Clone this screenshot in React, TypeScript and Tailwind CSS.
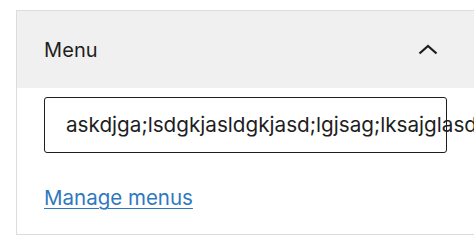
import React from 'react'

const ChevronUp: React.FC = () => (
  <svg width="24" height="24" viewBox="0 0 24 24" className="text-[#1e1e1e]">
    <path d="M3.5 15.5 L12 8 L20.5 15.5" fill="none" stroke="currentColor" strokeWidth="2.3" />
  </svg>
)

const App: React.FC = () => {
  return (
    <div className="w-[474px] h-[250px] overflow-hidden bg-white pt-[10px] pl-[16px]" style={{ fontFamily: 'Inter, "Noto Sans", sans-serif' }}>
      <div className="w-[458px] border-l border-t border-[#dcdcdc] bg-white">
        {/* panel header */}
        <div className="h-[77px] bg-[#f0f0f0] flex items-center justify-between pl-[27px] pr-[34px]">
          <span className="text-[20px] leading-[24px] text-[#1e1e1e] tracking-[0.1px]">Menu</span>
          <ChevronUp />
        </div>
        <div className="px-[27px] pt-[9px] pb-[24px] border-b border-[#dcdcdc]">
          <div className="h-[56px] border-[1.5px] border-[#1e1e1e] rounded-[3px] flex items-center pl-[21px] whitespace-nowrap overflow-visible">
            <span className="text-[20.7px] leading-[24px] text-[#1e1e1e]">askdjga;lsdgkjasldgkjasd;lgjsag;lksajglasd</span>
          </div>
          <div className="mt-[33px] flex">
            <a href="#" className="block text-[20.5px] leading-[24px] text-[#2f78bd] underline underline-offset-[3px] decoration-[1px]">Manage menus</a>
          </div>
        </div>
      </div>
    </div>
  )
}

export default App
